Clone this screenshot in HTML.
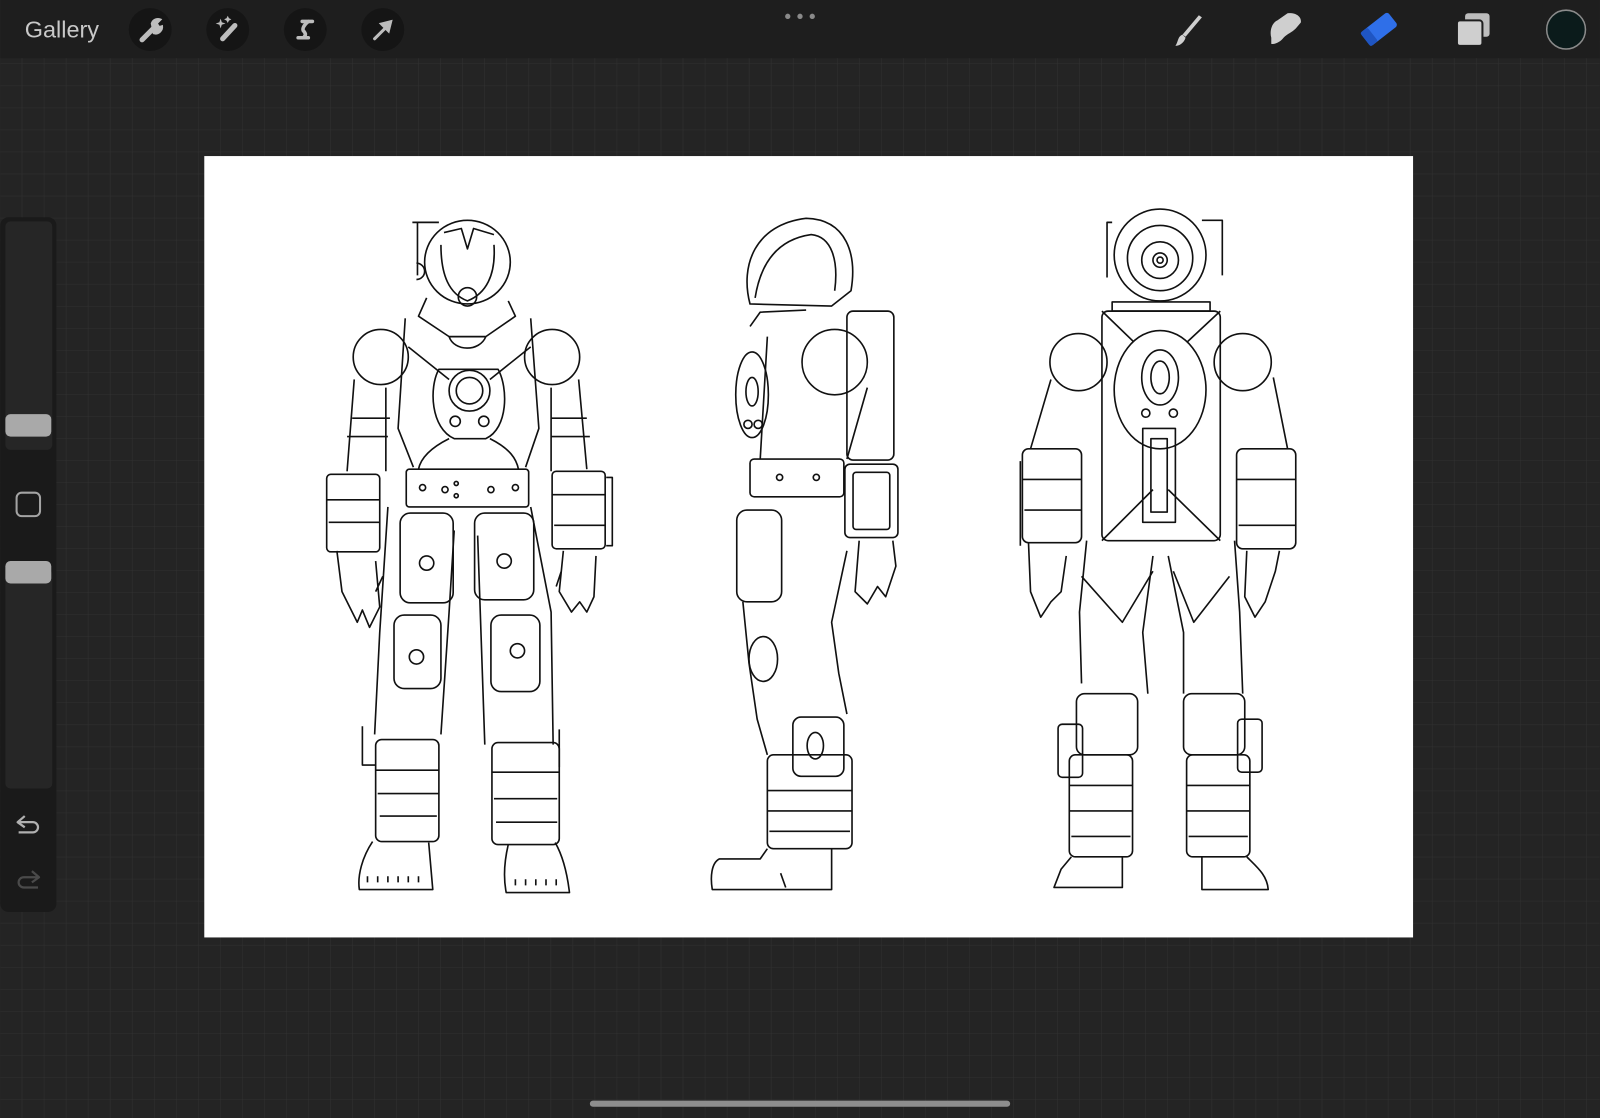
<!DOCTYPE html>
<html><head><meta charset="utf-8"><style>
html,body{margin:0;padding:0;background:#242424;overflow:hidden}
svg{display:block}
</style></head><body>
<svg width="1600" height="1118" viewBox="0 0 1568 1096" xmlns="http://www.w3.org/2000/svg">
<defs>
<pattern id="g" x="0" y="-2" width="21.6" height="21.6" patternUnits="userSpaceOnUse">
<path d="M21.6 0V21.6M0 21.6H21.6" stroke="#313131" stroke-width="1" fill="none"/>
</pattern>
</defs>
<rect width="1568" height="1096" fill="#242424"/>
<rect width="1568" height="1096" fill="url(#g)"/>
<rect width="1568" height="57" fill="#1e1e1e"/>
<text x="24" y="37" font-family="Liberation Sans, sans-serif" font-size="23" fill="#c9c9c9">Gallery</text>
<g fill="#151515"><circle cx="147" cy="29" r="21"/><circle cx="223" cy="29" r="21"/><circle cx="299" cy="29" r="21"/><circle cx="375" cy="29" r="21"/></g>
<g fill="#bdbdbd" stroke="#bdbdbd" stroke-linecap="round">
<path d="M139 39 L150 28" stroke-width="5"/><path d="M148 23 a7 7 0 0 1 10 -4 l-4 4 l2 3 l3 -1 a7 7 0 0 1 -9 8z" stroke-width="1"/>
<path d="M218 38 L230 25" stroke-width="5"/><path d="M215 22 l1 -3 l1 3 l3 1 l-3 1 l-1 3 l-1 -3 l-3 -1z M222 18 l1 -2 l1 2 l2 1 l-2 1 l-1 2 l-1 -2 l-2 -1z" stroke-width="0.5"/>
<path d="M296 21 H306 M302 21 C298 24 296 28 297 30 C299 32 300 34 298 36 M292 37 H302" stroke-width="3.5" fill="none"/>
<path d="M367 38 L381 24" stroke-width="3"/><path d="M384 20 L372 23 L381 32z" stroke-width="1"/>
</g>
<g fill="#8a8a8a"><circle cx="772" cy="16" r="2.6"/><circle cx="784" cy="16" r="2.6"/><circle cx="796" cy="16" r="2.6"/></g>
<g fill="#cfcfcf">
<path d="M1175 15 L1178 17 L1162 36 L1159 34z"/><path d="M1159 34 L1162 37 C1160 43 1155 45 1152 45 C1155 41 1154 36 1159 34z"/>
<path d="M1246 37 C1244 30 1247 22 1252 20 L1262 13 C1268 12 1276 15 1275 22 L1270 28 C1266 32 1262 33 1258 37 C1256 40 1250 44 1246 43z"/>
<rect x="1436" y="13" width="24" height="23" rx="3" fill="#bdbdbd"/>
<rect x="1428" y="20" width="25" height="25" rx="3" stroke="#1e1e1e" stroke-width="2"/>
</g>
<g transform="rotate(-38 1352 29)"><rect x="1335" y="20" width="34" height="17" rx="3" fill="#2f6fe8"/><rect x="1335" y="20" width="9" height="17" rx="2" fill="#1f55c2"/></g>
<circle cx="1535" cy="29" r="19" fill="#0b1b1b" stroke="#8b8b8b" stroke-width="1.5"/>
<rect x="200" y="153" width="1185" height="766" fill="#ffffff"/>
<g fill="none" stroke="#111" stroke-width="1.6" stroke-linejoin="round">
<ellipse cx="458" cy="257" rx="42" ry="41"/>
<path d="M432 240 C432 270 440 288 458 295 C476 288 486 270 484 240"/>
<path d="M435 228 L452 224 L458 244 L464 224 L484 230"/>
<circle cx="458" cy="291" r="9"/>
<path d="M404 218 H430 M409 218 V270 M408 258 a8 8 0 0 1 0 16"/>
<path d="M418 292 L410 310 L440 330 L476 330 L505 310 L498 295"/>
<path d="M440 330 C445 345 470 345 476 330"/>
<circle cx="373" cy="350" r="27"/><circle cx="541" cy="350" r="27"/>
<path d="M397 312 L390 420 L405 458 M520 312 L528 420 L515 458"/>
<path d="M400 340 L440 372 M520 340 L480 372"/>
<path d="M430 362 C420 380 422 420 445 430 H476 C498 420 498 380 488 362 Z"/>
<circle cx="460" cy="383" r="20"/><circle cx="460" cy="383" r="13"/>
<circle cx="446" cy="413" r="5"/><circle cx="474" cy="413" r="5"/>
<path d="M440 430 C420 440 412 450 410 460 M480 430 C500 440 506 450 508 460"/>
<rect x="398" y="460" width="120" height="37" rx="3"/>
<circle cx="414" cy="478" r="3"/><circle cx="436" cy="480" r="3"/><circle cx="447" cy="474" r="2"/><circle cx="447" cy="486" r="2"/><circle cx="481" cy="480" r="3"/><circle cx="505" cy="478" r="3"/>
<path d="M347 372 L340 462 M378 380 L378 462 M345 410 H382 M340 428 H380"/>
<path d="M567 372 L575 460 M540 380 L540 462 M540 410 H575 M540 428 H578"/>
<rect x="320" y="465" width="52" height="76" rx="4"/><path d="M320 490 H372 M322 512 H372"/>
<rect x="541" y="462" width="52" height="76" rx="4"/><path d="M541 485 H593 M543 515 H593 M594 468 H600 V535 H594"/>
<path d="M330 540 L335 580 L350 610 L355 598 L362 615 L372 595 L368 550 M375 565 L368 580"/>
<path d="M552 540 L548 580 L560 600 L568 590 L575 600 L582 585 L584 545 M550 560 L545 575"/>
<rect x="392" y="503" width="52" height="88" rx="10"/><rect x="465" y="503" width="58" height="85" rx="10"/>
<circle cx="418" cy="552" r="7"/><circle cx="494" cy="550" r="7"/>
<path d="M380 497 L372 620 L367 720 M445 520 L440 600 L432 720 M468 525 L475 730 M520 497 L540 600 L542 730"/>
<rect x="386" y="603" width="46" height="72" rx="10"/><rect x="481" y="603" width="48" height="75" rx="10"/>
<circle cx="408" cy="644" r="7"/><circle cx="507" cy="638" r="7"/>
<rect x="368" y="725" width="62" height="100" rx="6"/><path d="M368 755 H430 M370 778 H430 M372 800 H428 M355 712 V750 H368"/>
<rect x="482" y="728" width="66" height="100" rx="6"/><path d="M482 757 H548 M484 783 H546 M486 806 H546 M548 715 V752"/>
<path d="M365 825 C355 840 350 858 352 872 H424 L420 826"/><path d="M360 865 v-6 M370 865 v-6 M380 865 v-6 M390 865 v-6 M400 865 v-6 M410 865 v-6"/>
<path d="M498 828 C494 845 493 860 496 875 H558 C556 858 552 840 544 826"/><path d="M505 868 v-6 M515 868 v-6 M525 868 v-6 M535 868 v-6 M545 868 v-6"/>
<path d="M735 298 C725 260 740 220 790 214 C830 215 840 250 834 285 L815 300 Z"/>
<path d="M740 292 C745 260 760 235 795 230 C815 232 822 255 818 285"/>
<path d="M735 320 L745 306 L790 304"/>
<rect x="830" y="305" width="46" height="146" rx="6"/>
<circle cx="818" cy="355" r="32"/>
<ellipse cx="737" cy="387" rx="16" ry="42"/><ellipse cx="737" cy="384" rx="6" ry="14"/>
<circle cx="733" cy="416" r="4"/><circle cx="743" cy="416" r="4"/>
<path d="M752 330 L745 450 M850 380 L830 450"/>
<rect x="735" y="450" width="92" height="37" rx="4"/><circle cx="764" cy="468" r="3"/><circle cx="800" cy="468" r="3"/>
<rect x="828" y="455" width="52" height="72" rx="5"/><rect x="836" y="463" width="36" height="56" rx="3"/>
<path d="M842 530 L838 580 L850 592 L860 575 L868 585 L878 555 L875 530"/>
<rect x="722" y="500" width="44" height="90" rx="10"/>
<path d="M728 590 L734 650 L742 705 L752 740 M830 540 L815 610 L822 660 L830 700"/>
<ellipse cx="748" cy="646" rx="14" ry="22"/>
<rect x="777" y="703" width="50" height="58" rx="8"/><ellipse cx="799" cy="731" rx="8" ry="13"/>
<rect x="752" y="740" width="83" height="92" rx="6"/><path d="M752 775 H835 M752 795 H835 M754 815 H833"/>
<path d="M752 832 L745 842 H705 C697 846 696 860 698 872 H815 V832"/>
<path d="M765 856 L770 870"/>
<circle cx="1137" cy="250" r="45"/><circle cx="1137" cy="253" r="32"/><circle cx="1137" cy="255" r="18"/><circle cx="1137" cy="255" r="7"/><circle cx="1137" cy="255" r="3"/>
<path d="M1090 218 H1085 V272 M1178 216 H1198 V270"/>
<path d="M1090 296 H1186 V305 H1090Z"/>
<rect x="1080" y="305" width="116" height="225" rx="6"/>
<path d="M1080 305 L1137 360 L1196 305 M1080 530 L1130 480 M1196 530 L1145 480"/>
<ellipse cx="1137" cy="382" rx="45" ry="58" fill="#fff"/><ellipse cx="1137" cy="370" rx="18" ry="27"/><ellipse cx="1137" cy="370" rx="9" ry="16"/>
<circle cx="1123" cy="405" r="4"/><circle cx="1150" cy="405" r="4"/>
<rect x="1120" y="420" width="32" height="92"/><rect x="1128" y="430" width="16" height="72"/>
<circle cx="1057" cy="355" r="28"/><circle cx="1218" cy="355" r="28"/>
<path d="M1030 372 L1010 440 M1248 370 L1262 440"/>
<rect x="1002" y="440" width="58" height="92" rx="6"/><path d="M1002 470 H1060 M1004 500 H1060 M1000 452 V535"/>
<rect x="1212" y="440" width="58" height="98" rx="6"/><path d="M1212 470 H1270 M1214 515 H1270"/>
<path d="M1008 532 L1010 580 L1020 605 L1030 590 L1040 580 L1045 545"/>
<path d="M1222 540 L1220 585 L1230 605 L1240 590 L1250 560 L1254 540"/>
<path d="M1065 530 L1058 600 L1060 670 M1130 545 L1120 620 L1125 680 M1145 545 L1160 620 L1160 680 M1210 530 L1215 600 L1218 680"/>
<path d="M1060 565 L1100 610 L1130 560 M1150 560 L1170 610 L1205 565"/>
<rect x="1055" y="680" width="60" height="60" rx="8"/><rect x="1160" y="680" width="60" height="60" rx="8"/>
<rect x="1037" y="710" width="24" height="52" rx="4"/><rect x="1213" y="705" width="24" height="52" rx="4"/>
<rect x="1048" y="740" width="62" height="100" rx="6"/><path d="M1048 770 H1110 M1048 795 H1110 M1050 820 H1108"/>
<rect x="1163" y="740" width="62" height="100" rx="6"/><path d="M1163 770 H1225 M1163 795 H1225 M1165 820 H1223"/>
<path d="M1050 840 L1040 852 L1033 870 H1100 V840"/>
<path d="M1178 840 V872 H1243 C1242 858 1232 850 1222 840"/>
</g>
<rect x="0" y="213" width="55" height="681" rx="8" fill="#1a1a1a"/>
<rect x="5" y="217" width="46" height="224" rx="5" fill="#262626"/>
<rect x="5" y="406" width="45" height="22" rx="5" fill="#a9a9a9"/>
<rect x="16" y="483" width="23" height="23" rx="5" fill="none" stroke="#a4a4a4" stroke-width="2"/>
<rect x="5" y="558" width="46" height="215" rx="5" fill="#262626"/>
<rect x="5" y="550" width="45" height="22" rx="5" fill="#a9a9a9"/>
<path d="M18 806 H32 a5 5 0 0 1 0 10 H18 M24 800 L17 806 L24 811" fill="none" stroke="#b0b0b0" stroke-width="2.2" stroke-linejoin="round"/>
<path d="M37 860 H23 a5 5 0 0 0 0 10 H37 M31 854 L38 860 L31 865" fill="none" stroke="#4a4a4a" stroke-width="2.2" stroke-linejoin="round"/>
<rect x="578" y="1079" width="412" height="6" rx="3" fill="#8e8e8e"/>
</svg>
</body></html>
